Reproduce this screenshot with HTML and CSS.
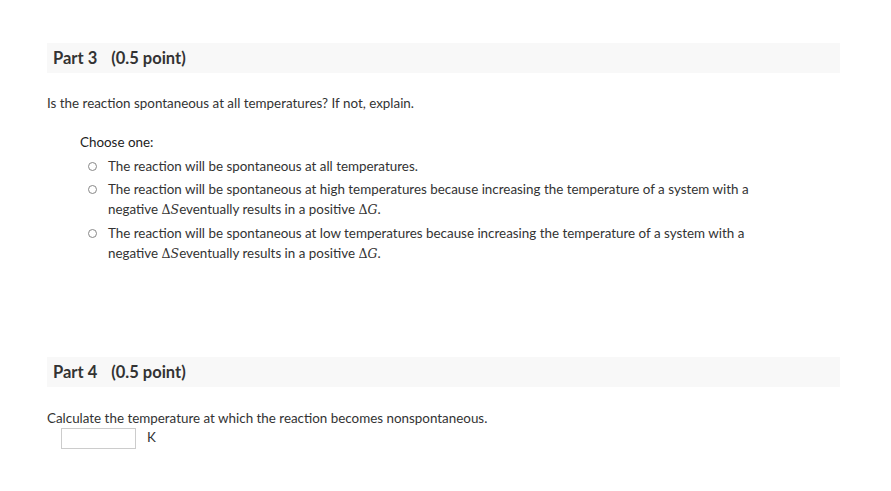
FILE: index.html
```html
<!DOCTYPE html>
<html>
<head>
<meta charset="utf-8">
<link rel="stylesheet" href="styles.css">
</head>
<body>
<div class="page">
  <section class="part part3">
    <h2 class="part-head"><span class="part-num">Part 3</span><span class="part-pts">(0.5 point)</span></h2>
    <p class="question">Is the reaction spontaneous at all temperatures? If not, explain.</p>
    <div class="choices">
      <div class="choose-label">Choose one:</div>
      <ul class="options">
        <li class="option"><span class="radio"></span><span class="opt-text">The reaction will be spontaneous at all temperatures.</span></li>
        <li class="option"><span class="radio"></span><span class="opt-text">The reaction will be spontaneous at high temperatures because increasing the temperature of a system with a negative <span class="math">Δ<i>S</i></span>eventually results in a positive <span class="math">Δ<i>G</i></span>.</span></li>
        <li class="option"><span class="radio"></span><span class="opt-text">The reaction will be spontaneous at low temperatures because increasing the temperature of a system with a negative <span class="math">Δ<i>S</i></span>eventually results in a positive <span class="math">Δ<i>G</i></span>.</span></li>
      </ul>
    </div>
  </section>
  <section class="part part4">
    <h2 class="part-head"><span class="part-num">Part 4</span><span class="part-pts">(0.5 point)</span></h2>
    <p class="question q4">Calculate the temperature at which the reaction becomes nonspontaneous.</p>
    <div class="answer"><span class="input"></span><span class="unit">K</span></div>
  </section>
</div>
</body>
</html>
```
FILE: styles.css
```css
* { box-sizing: border-box; }
html, body { margin: 0; padding: 0; background: #fff; }
body {
  font-family: Lato, "Open Sans", "Liberation Sans", sans-serif;
  color: #333;
  font-size: 13.4px;
}
.page {
  width: 840px;
  padding-left: 47px;
}
.part3 { padding-top: 43px; }
.part4 { padding-top: 90px; }
.part-head {
  margin: 0;
  height: 30px;
  line-height: 30px;
  background: #f8f8f8;
  font-size: 16.5px;
  font-weight: 700;
  padding-left: 6px;
  color: #333;
  display: flex;
  gap: 14px;
}
.question {
  margin: 0;
  margin-top: 21px;
  line-height: 18px;
}
.choices {
  padding-left: 33px;
  margin-top: 20px;
}
.choose-label {
  line-height: 20px;
  color: #222;
}
.options {
  list-style: none;
  margin: 4px 0 0;
  padding: 0;
  width: 680px;
}
.option {
  display: flex;
  line-height: 20px;
  margin-bottom: 3px;
}
.radio {
  flex: none;
  width: 9px;
  height: 9px;
  border: 1px solid #888;
  border-radius: 50%;
  margin: 6px 11px 0 8px;
}
.math { font-family: "DejaVu Serif", "Liberation Serif", serif; font-size: 12.5px; }
.math i { font-style: italic; }
.q4 { margin-top: 22px; }
.answer {
  display: flex;
  align-items: center;
  padding-left: 14px;
  margin-top: 1px;
}
.input {
  width: 75px;
  height: 21px;
  border: 1px solid #ccc;
  background: #fff;
}
.unit {
  margin-left: 11px;
  margin-top: -3px;
}
```
